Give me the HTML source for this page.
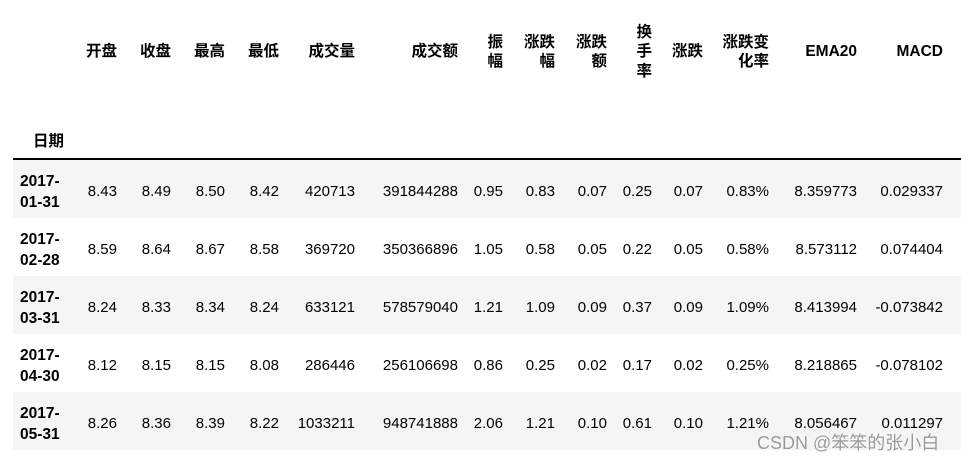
<!DOCTYPE html>
<html><head><meta charset="utf-8"><style>
body{margin:0;width:961px;height:459px;background:#fff;position:relative;overflow:hidden;font-family:"Liberation Sans","DejaVu Sans","Noto Sans CJK SC",sans-serif;color:#000}
.band{position:absolute;left:13px;right:0;height:58px;background:#f5f5f5}
.line{position:absolute;left:13px;right:0;top:158px;height:2px;background:#000}
.h{position:absolute;top:0;height:104px;width:120px;display:flex;align-items:center;justify-content:flex-end;text-align:right;font-weight:bold;font-size:15.5px;line-height:19.5px}
.v{position:absolute;width:120px;text-align:right;font-size:15px;line-height:16px}
.d{position:absolute;left:20px;font-weight:bold;font-size:15.5px;line-height:21px}
.wm{position:absolute;left:757px;top:429px;font-size:18px;color:#9a9a9a;text-shadow:0 0 2px #fff;font-family:"Liberation Sans","Noto Sans CJK SC",sans-serif}
</style></head><body>
<div class="band" style="top:160px"></div>
<div class="band" style="top:276px"></div>
<div class="band" style="top:392px"></div>
<div class="line"></div>

<div class="h" style="left:-3px">开盘</div>
<div class="h" style="left:51px">收盘</div>
<div class="h" style="left:105px">最高</div>
<div class="h" style="left:159px">最低</div>
<div class="h" style="left:235px">成交量</div>
<div class="h" style="left:338px">成交额</div>
<div class="h" style="left:383px">振<br>幅</div>
<div class="h" style="left:435px">涨跌<br>幅</div>
<div class="h" style="left:487px">涨跌<br>额</div>
<div class="h" style="left:532px">换<br>手<br>率</div>
<div class="h" style="left:583px">涨跌</div>
<div class="h" style="left:649px">涨跌变<br>化率</div>
<div class="h" style="left:737px">EMA20</div>
<div class="h" style="left:823px">MACD</div>
<div class="d" style="top:131px;left:33px">日期</div>

<div class="d" style="top:171px">2017-<br>01-31</div>
<div class="d" style="top:229px">2017-<br>02-28</div>
<div class="d" style="top:287px">2017-<br>03-31</div>
<div class="d" style="top:345px">2017-<br>04-30</div>
<div class="d" style="top:403px">2017-<br>05-31</div>

<div style="position:absolute;top:184px;left:0;width:961px;height:16px">
<div class="v" style="left:-3px">8.43</div><div class="v" style="left:51px">8.49</div><div class="v" style="left:105px">8.50</div><div class="v" style="left:159px">8.42</div><div class="v" style="left:235px">420713</div><div class="v" style="left:338px">391844288</div><div class="v" style="left:383px">0.95</div><div class="v" style="left:435px">0.83</div><div class="v" style="left:487px">0.07</div><div class="v" style="left:532px">0.25</div><div class="v" style="left:583px">0.07</div><div class="v" style="left:649px">0.83%</div><div class="v" style="left:737px">8.359773</div><div class="v" style="left:823px">0.029337</div>
</div>
<div style="position:absolute;top:242px;left:0;width:961px;height:16px">
<div class="v" style="left:-3px">8.59</div><div class="v" style="left:51px">8.64</div><div class="v" style="left:105px">8.67</div><div class="v" style="left:159px">8.58</div><div class="v" style="left:235px">369720</div><div class="v" style="left:338px">350366896</div><div class="v" style="left:383px">1.05</div><div class="v" style="left:435px">0.58</div><div class="v" style="left:487px">0.05</div><div class="v" style="left:532px">0.22</div><div class="v" style="left:583px">0.05</div><div class="v" style="left:649px">0.58%</div><div class="v" style="left:737px">8.573112</div><div class="v" style="left:823px">0.074404</div>
</div>
<div style="position:absolute;top:300px;left:0;width:961px;height:16px">
<div class="v" style="left:-3px">8.24</div><div class="v" style="left:51px">8.33</div><div class="v" style="left:105px">8.34</div><div class="v" style="left:159px">8.24</div><div class="v" style="left:235px">633121</div><div class="v" style="left:338px">578579040</div><div class="v" style="left:383px">1.21</div><div class="v" style="left:435px">1.09</div><div class="v" style="left:487px">0.09</div><div class="v" style="left:532px">0.37</div><div class="v" style="left:583px">0.09</div><div class="v" style="left:649px">1.09%</div><div class="v" style="left:737px">8.413994</div><div class="v" style="left:823px">-0.073842</div>
</div>
<div style="position:absolute;top:358px;left:0;width:961px;height:16px">
<div class="v" style="left:-3px">8.12</div><div class="v" style="left:51px">8.15</div><div class="v" style="left:105px">8.15</div><div class="v" style="left:159px">8.08</div><div class="v" style="left:235px">286446</div><div class="v" style="left:338px">256106698</div><div class="v" style="left:383px">0.86</div><div class="v" style="left:435px">0.25</div><div class="v" style="left:487px">0.02</div><div class="v" style="left:532px">0.17</div><div class="v" style="left:583px">0.02</div><div class="v" style="left:649px">0.25%</div><div class="v" style="left:737px">8.218865</div><div class="v" style="left:823px">-0.078102</div>
</div>
<div style="position:absolute;top:416px;left:0;width:961px;height:16px">
<div class="v" style="left:-3px">8.26</div><div class="v" style="left:51px">8.36</div><div class="v" style="left:105px">8.39</div><div class="v" style="left:159px">8.22</div><div class="v" style="left:235px">1033211</div><div class="v" style="left:338px">948741888</div><div class="v" style="left:383px">2.06</div><div class="v" style="left:435px">1.21</div><div class="v" style="left:487px">0.10</div><div class="v" style="left:532px">0.61</div><div class="v" style="left:583px">0.10</div><div class="v" style="left:649px">1.21%</div><div class="v" style="left:737px">8.056467</div><div class="v" style="left:823px">0.011297</div>
</div>
<div class="wm">CSDN @笨笨的张小白</div>
</body></html>
